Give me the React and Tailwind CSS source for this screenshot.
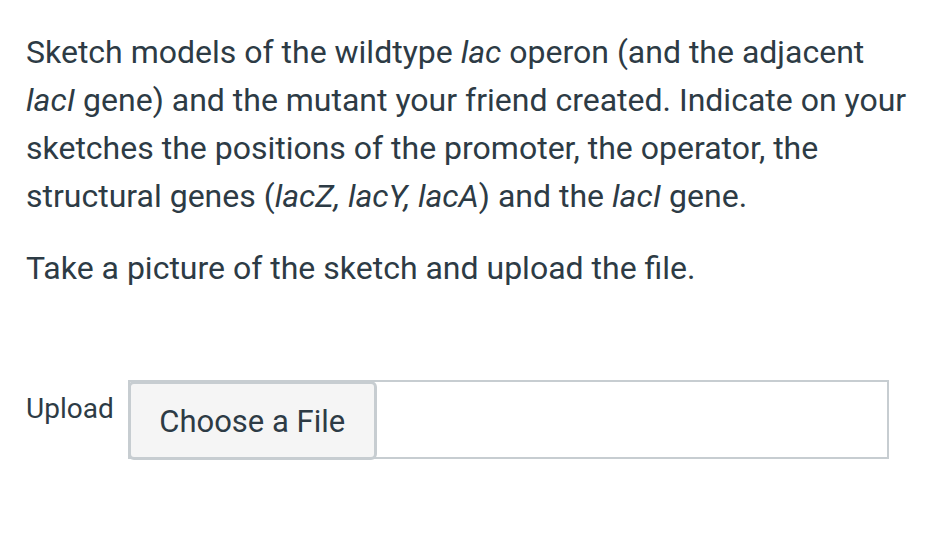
export default function App() {
  return (
    <div className="min-h-screen bg-white pl-[26px] pr-6 pt-7 text-[#2d3b45] font-['Roboto',sans-serif]">
      <p className="text-[32px] leading-[48px]">
        Sketch models of the wildtype <i>lac</i> operon (and the adjacent{" "}
        <i>lacI</i> gene) and the mutant your friend created. Indicate on your
        sketches the positions of the promoter, the operator, the structural
        genes (<i>lacZ, lacY, lacA</i>) and the <i>lacI</i> gene.
      </p>
      <p className="mt-6 text-[32px] leading-[48px]">
        Take a picture of the sketch and upload the file.
      </p>
      <div className="mt-[88px] flex items-start gap-[14px]">
        <span className="mt-[13px] text-[28px] leading-[32px]">Upload</span>
        <div className="flex h-[79px] w-[761px] border-2 border-[#c7cdd1]">
          <button className="-ml-[2px] -mt-[1px] h-[79px] w-[249px] rounded-[6px] border-[3px] border-[#c7cdd1] bg-[#f5f5f5] pt-[3px] text-[31px] text-[#2d3b45]">
            Choose a File
          </button>
        </div>
      </div>
    </div>
  );
}
